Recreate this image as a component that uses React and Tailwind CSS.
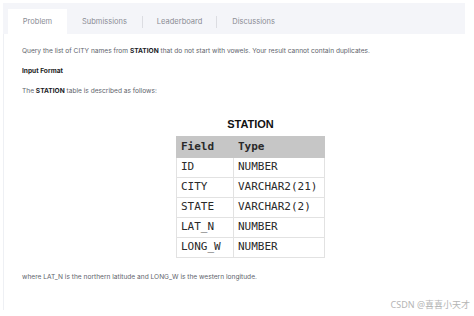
import React from 'react';

const rows = [
    ['ID', 'NUMBER'],
    ['CITY', 'VARCHAR2(21)'],
    ['STATE', 'VARCHAR2(2)'],
    ['LAT_N', 'NUMBER'],
    ['LONG_W', 'NUMBER'],
];

const App = () => {
    return (
        <div className="w-[474px] h-[316px] bg-white overflow-hidden relative font-['Inter',sans-serif]">
            {/* Tabs */}
            <div className="mt-[3px] ml-[3px] mr-[9px] h-[31px] bg-[#f4f5f9] flex items-end pl-[5px]">
                <div className="h-[25px] w-[59px] bg-white flex items-center justify-center text-[7.5px] text-[#8a8c94]">Problem</div>
                <div className="h-[25px] flex items-center text-[7.5px] text-[#8a8c94]">
                    <span className="px-[15px]">Submissions</span>
                    <span className="w-px h-[12px] bg-[#dcdde2]"></span>
                    <span className="px-[14px]">Leaderboard</span>
                    <span className="w-px h-[12px] bg-[#dcdde2]"></span>
                    <span className="px-[15px]">Discussions</span>
                </div>
            </div>

            {/* Content */}
            <div className="ml-[3px] mr-[9px] h-[276px] border-l border-[#eef0f4] pl-[18px] pt-[12px] text-[6.6px] text-[#60636b]">
                <p className="leading-[10px]">
                    Query the list of CITY names from <b className="text-[#1a1b1f]">STATION</b> that do not start with vowels. Your result cannot contain duplicates.
                </p>
                <p className="mt-[10px] leading-[10px] font-bold text-[#222]">Input Format</p>
                <p className="mt-[10px] leading-[10px]">
                    The <b className="text-[#1a1b1f]">STATION</b> table is described as follows:
                </p>

                <div className="mt-[21px] ml-[154px] w-[149px] flex flex-col">
                    <div className="text-center font-['Liberation_Sans',sans-serif] font-bold text-[11px] text-[#111] leading-[14px]">STATION</div>
                    <table className="mt-[5px] w-[149px] border-collapse font-['DejaVu_Sans_Mono',monospace] text-[11px] text-[#2a2a2a]">
                        <thead>
                            <tr className="bg-[#c6c6c6]">
                                <th className="w-[57px] h-[21px] pl-[4px] text-left font-bold border border-[#c6c6c6]">Field</th>
                                <th className="h-[21px] pl-[4px] text-left font-bold border border-[#c6c6c6]">Type</th>
                            </tr>
                        </thead>
                        <tbody>
                            {rows.map(([f, t]) => (
                                <tr key={f}>
                                    <td className="h-[20px] pl-[4px] border border-[#e2e2e2]">{f}</td>
                                    <td className="h-[20px] pl-[4px] border border-[#e2e2e2]">{t}</td>
                                </tr>
                            ))}
                        </tbody>
                    </table>
                </div>

                <p className="mt-[14px] leading-[10px]">
                    where LAT_N is the northern latitude and LONG_W is the western longitude.
                </p>
            </div>

            <div className="absolute right-[4px] bottom-[5px] text-[9px] text-[#b5b5b5] font-['Noto_Sans','Noto_Sans_CJK_SC',sans-serif]">CSDN @喜喜小天才</div>
        </div>
    );
};

export default App;
